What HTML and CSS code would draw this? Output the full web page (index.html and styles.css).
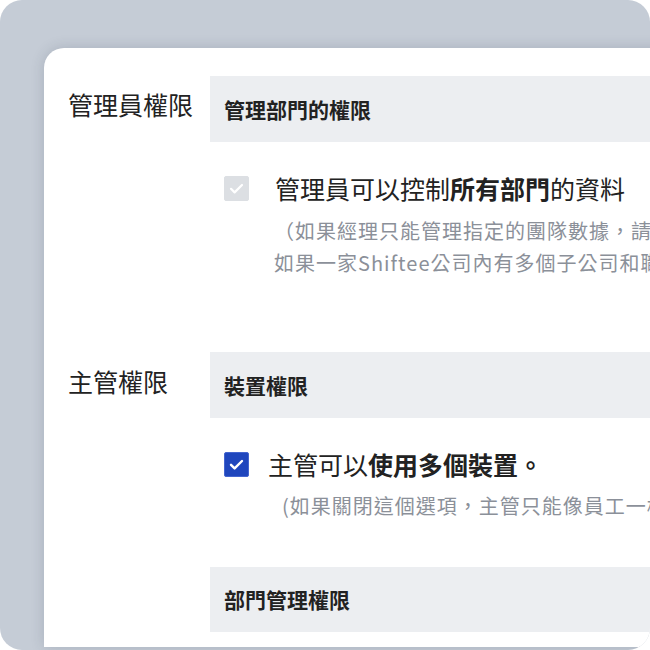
FILE: index.html
```html
<!DOCTYPE html>
<html lang="zh-TW">
<head>
<meta charset="UTF-8">
<title>權限設定</title>
<link rel="stylesheet" href="styles.css">
</head>
<body>
<div class="frame">
  <div class="card">
    <div class="section">
      <div class="section-label">管理員權限</div>
      <div class="section-body">
        <div class="group-title">管理部門的權限</div>
        <div class="option">
          <span class="checkbox disabled">
            <svg width="25" height="25" viewBox="0 0 25 25"><path d="M7 12.8l3.6 3.6 7.4-7.4" fill="none" stroke="#fff" stroke-width="2.2" stroke-linecap="round" stroke-linejoin="round"/></svg>
          </span>
          <span class="option-text wide">管理員可以控制<b>所有部門</b>的資料</span>
        </div>
        <div class="option-note wide">（如果經理只能管理指定的團隊數據，請關閉此選項。<br>如果一家Shiftee公司內有多個子公司和職能部門，可以分別設定。）</div>
      </div>
    </div>

    <div class="section second">
      <div class="section-label">主管權限</div>
      <div class="section-body">
        <div class="group-title">裝置權限</div>
        <div class="option">
          <span class="checkbox checked">
            <svg width="25" height="25" viewBox="0 0 25 25"><path d="M7 12.8l3.6 3.6 7.4-7.4" fill="none" stroke="#fff" stroke-width="2.4" stroke-linecap="round" stroke-linejoin="round"/></svg>
          </span>
          <span class="option-text">主管可以<b>使用多個裝置。</b></span>
        </div>
        <div class="option-note narrow">(如果關閉這個選項，主管只能像員工一樣使用一個裝置。)</div>
        <div class="group-title last">部門管理權限</div>
      </div>
    </div>
  </div>
</div>
</body>
</html>
```

FILE: styles.css
```css
body {
  margin: 0;
  background-color: #ffffff;
  font-family: "Noto Sans CJK TC", "Noto Sans", sans-serif;
  color: #222222;
}
.frame {
  width: 650px;
  height: 650px;
  box-sizing: border-box;
  padding: 48px 0 0 44px;
  background-color: #c5ccd6;
  border-radius: 22px;
  overflow: hidden;
}
.card {
  width: 720px;
  height: 599px;
  box-sizing: border-box;
  padding-top: 28px;
  padding-left: 24px;
  background-color: #ffffff;
  border-top-left-radius: 20px;
  box-shadow: 0 0 14px rgba(40, 50, 70, 0.18);
  overflow: hidden;
}
.section {
  display: flex;
}
.section.second {
  margin-top: 73px;
}
.section-label {
  width: 142px;
  flex-shrink: 0;
  padding-top: 16px;
  font-size: 25px;
  line-height: 25px;
  color: #222222;
}
.section.second .section-label {
  padding-top: 17px;
}
.section-body {
  flex: 1;
}
.group-title {
  height: 66px;
  padding-left: 14px;
  background-color: #eceef1;
  font-size: 21px;
  font-weight: bold;
  line-height: 66px;
  color: #222222;
}
.group-title.last {
  margin-top: 45px;
  height: 65px;
  line-height: 64px;
}
.option {
  display: flex;
  align-items: center;
  margin-top: 34px;
  padding-left: 14px;
}
.checkbox {
  width: 25px;
  height: 25px;
  flex-shrink: 0;
  box-sizing: border-box;
  border-radius: 2px;
}
.checkbox svg {
  display: block;
  margin: -1px;
}
.checkbox.disabled {
  background-color: #dcdfe3;
  border: 1px solid #dcdfe3;
}
.checkbox.checked {
  background-color: #1f46bd;
  border: 1px solid #4465cf;
}
.option-text {
  margin-left: 19px;
  font-size: 25px;
  line-height: 25px;
  white-space: nowrap;
}
.option-text.wide {
  margin-left: 26px;
}
.option-text b {
  font-weight: bold;
}
.option-note {
  margin-top: 14px;
  font-size: 20px;
  line-height: 32px;
  letter-spacing: 1px;
  color: #8b9099;
  white-space: nowrap;
}
.option-note.wide {
  padding-left: 64px;
}
.option-note.narrow {
  margin-top: 13px;
  padding-left: 72px;
}
```
